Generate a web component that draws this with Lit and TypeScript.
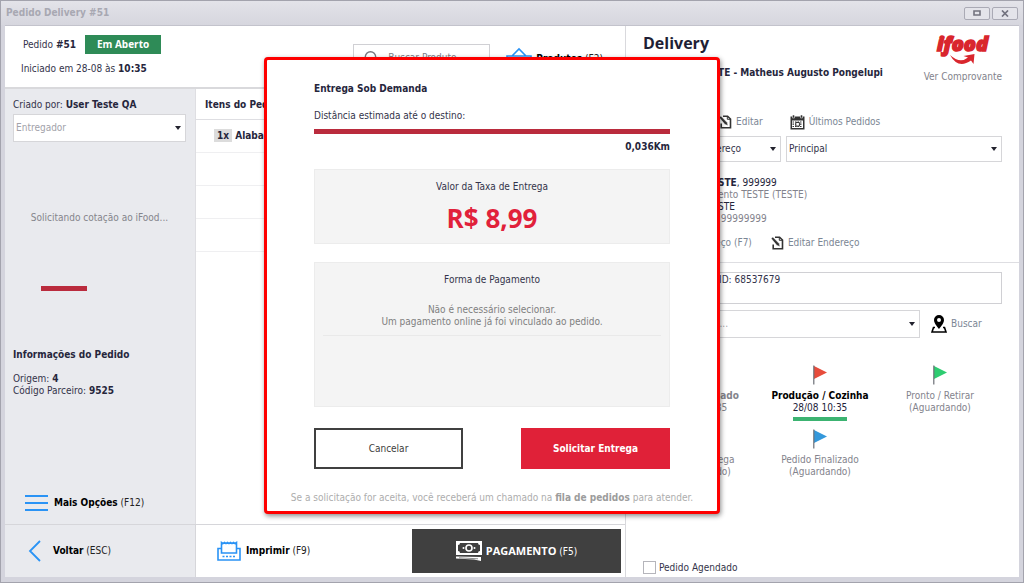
import { LitElement, html, css, svg } from "lit";
import { customElement, property } from "lit/decorators.js";
import { classMap } from "lit/directives/class-map.js";

const caret = html`<svg class="caret" viewBox="0 0 6 4" aria-hidden="true"><path d="M0 0h6L3 4z" fill="currentColor" /></svg>`;

const editIcon = html`<svg class="ico" width="14" height="14" viewBox="0 0 14 14" fill="none" aria-hidden="true">
  <path d="M5 1.2h4.6L12.5 4v8.8H3.2V8.5" stroke="#333" stroke-width="1.6" />
  <path d="M9.3 1v3.3h3.2" stroke="#333" stroke-width="1" />
  <path d="M1.2 2.6 2.8 1l6.4 6.6.8 2.9-3-.9z" fill="#333" stroke="#fff" stroke-width=".5" />
</svg>`;

interface Stage {
  title: string;
  detail: string;
  color: string;
  current?: boolean;
  past?: boolean;
}

@customElement("order-stage")
export class OrderStage extends LitElement {
  static styles = css`
    :host { display: block; text-align: center; color: #83838c; }
    .box { display: flex; flex-direction: column; align-items: center; height: 64px; }
    .flag { display: block; height: 20px; margin-bottom: 5px; }
    .past .title { font-weight: bold; color: #83838c; }
    .current .title { font-weight: bold; color: #000; }
    .current .detail { color: #22223a; }
    .current .detail::after { content: ""; display: block; height: 4px; margin-top: 3px; background: #3cb371; }
  `;
  @property({ attribute: false }) stage!: Stage;
  render() {
    const s = this.stage;
    return html`<div class=${classMap({ box: true, current: !!s.current, past: !!s.past })}>
      <svg class="flag" width="16" height="20" viewBox="0 0 16 20" aria-hidden="true">
        <path d="M2 1v13l13-6.500z" fill=${s.color} />
        <path d="M1.8 .5v19" stroke="#6b6f76" stroke-width="1.2" />
      </svg>
      <span class="title">${s.title}</span>
      <span class="detail">${s.detail}</span>
    </div>`;
  }
}

@customElement("delivery-dialog")
export class DeliveryDialog extends LitElement {
  static styles = css`
    :host {
      box-sizing: border-box;
      display: flex;
      flex-direction: column;
      padding: 23px 47px 7px;
      border: 3px solid #fe0000;
      border-radius: 4px;
      background: #fff;
      box-shadow: 1px 2px 5px rgba(0, 0, 0, 0.45);
      color: #33334a;
    }
    h2, p { margin: 0; font-size: 10px; line-height: 12px; }
    h2 { color: #26263c; margin-bottom: 15px; }
    .bar { height: 5px; margin: 7px 0; background: #ba2b3d; }
    .km { font-weight: bold; text-align: right; color: #26263c; margin-bottom: 16px; }
    .card { box-sizing: border-box; background: #f4f4f4; border: 1px solid #ececec; padding: 11px 8px; text-align: center; }
    .fee { height: 75px; margin-bottom: 18px; }
    .price { font: bold 26px/36px "Open Sans", "Noto Sans", sans-serif; color: #e1213a; margin-top: 7px; }
    .pay { height: 145px; }
    .note { color: #808080; margin-top: 18px; padding-bottom: 7px; border-bottom: 1px solid #e9e9e9; }
    .actions { display: flex; justify-content: space-between; margin: 21px 0 23px; }
    button { box-sizing: border-box; width: 149px; height: 41px; padding: 0; font: inherit; }
    .cancel { background: #fff; border: 2px solid #404040; color: #404040; }
    .ok { background: #e02138; border: 0; color: #fff; font-weight: bold; }
    .foot { text-align: center; color: #adadad; margin: 0 -40px; white-space: nowrap; }
    .foot b { color: #9c9c9c; }
  `;
  render() {
    return html`
      <h2>Entrega Sob Demanda</h2>
      <p>Distância estimada até o destino:</p>
      <div class="bar"></div>
      <p class="km">0,036Km</p>
      <section class="card fee">
        <p>Valor da Taxa de Entrega</p>
        <div class="price">R$ 8,99</div>
      </section>
      <section class="card pay">
        <p>Forma de Pagamento</p>
        <p class="note">Não é necessário selecionar.<br />Um pagamento online já foi vinculado ao pedido.</p>
      </section>
      <div class="actions">
        <button class="cancel" type="button">Cancelar</button>
        <button class="ok" type="button">Solicitar Entrega</button>
      </div>
      <p class="foot">Se a solicitação for aceita, você receberá um chamado na <b>fila de pedidos</b> para atender.</p>
    `;
  }
}

@customElement("app-root")
export class AppRoot extends LitElement {
  static styles = css`
    :host {
      box-sizing: border-box;
      position: relative;
      display: flex;
      flex-direction: column;
      min-height: 100vh;
      padding: 0 4px 5px;
      border: 1px solid #a3a3ad;
      background: #d4d4dd;
      font: 10px/12px "DejaVu Sans Condensed", "Noto Sans", sans-serif;
      color: #33334a;
    }
    * { box-sizing: border-box; }
    h1, h2, p { margin: 0; font-size: inherit; }
    b { color: #26263c; }
    button { display: flex; align-items: center; padding: 0; border: 0; background: none; font: inherit; color: inherit; text-align: left; }
    svg { display: block; flex: none; }

    .titlebar { display: flex; align-items: center; gap: 2px; height: 24px; margin: 0 -4px; padding: 0 5px; background: linear-gradient(#e3e3e9, #d6d6de); }
    .titlebar h1 { flex: 1; color: #a8a8b2; }
    .win { width: 26px; height: 13px; justify-content: center; border: 1px solid #aaaab5; border-radius: 2px; background: #e4e4ea; }

    .frame { flex: 1; display: grid; grid-template-columns: minmax(0, 1fr) 393px; border-top: 1px solid #c3c3cc; background: #fff; }
    .main { display: grid; grid-template-columns: 191px minmax(0, 1fr); grid-template-rows: 63px 1fr 53px; border-right: 1px solid #d9d9dd; }

    .top { grid-column: 1 / -1; display: flex; align-items: flex-start; padding: 9px 21px 0 16px; border-bottom: 2px solid #d9d9dc; }
    .order { flex: 1; }
    .state { display: flex; align-items: center; gap: 9px; padding-left: 2px; margin-bottom: 9px; }
    .badge { padding: 0 12px; background: #2e8b57; color: #fff; font: bold 10px/19px "Open Sans", sans-serif; }
    .search { display: flex; align-items: center; gap: 10px; width: 137px; height: 27px; margin: 9px 16px 0 0; padding-left: 10px; border: 1px solid #d0d0d4; }
    .search input { width: 90px; padding: 0; border: 0; outline: 0; font: inherit; background: none; }
    input::placeholder { color: #808088; opacity: 1; }
    .prod { gap: 4px; margin: 12px 1px 0 0; color: #222; }
    .prod b, .act b { color: #000; }

    .side { display: flex; flex-direction: column; padding: 10px 9px 12px 8px; background: #e9eaee; border-right: 1px solid #dedee2; }
    .pick { display: grid; align-items: center; border: 1px solid #d6d6d9; background: #fff; }
    .pick select { grid-area: 1 / 1; width: 100%; height: 100%; padding: 0 3px 0 2px; border: 0; appearance: none; background: none; font: inherit; color: #33334a; outline: 0; }
    .pick .caret { grid-area: 1 / 1; justify-self: end; width: 6px; height: 4px; margin-right: 4px; color: #22222e; pointer-events: none; }
    .side .pick { height: 28px; margin-top: 3px; }
    .side .pick select { color: #a2a2aa; }
    .wait { margin-top: 70px; text-align: center; color: #85858c; }
    .load { width: 46px; height: 5px; margin: 62px 0 58px 28px; background: #ba2b3d; }
    .info { margin-bottom: 12px; font-weight: bold; color: #26263c; }
    .act { gap: 6px; color: #222; }
    .side .act { margin-top: auto; padding-left: 12px; }

    .items { border-collapse: collapse; align-self: start; width: 100%; }
    .items th, .items td { height: 33px; padding: 0 9px; border-bottom: 1px solid #efeff1; text-align: left; font-weight: bold; color: #26263c; }
    .items th { height: 30px; padding-top: 2px; border-color: #dedee2; }
    .items td { padding-left: 18px; }
    .qty { display: inline-block; padding: 0 3px; background: #dcdcdc; line-height: 13px; }

    .back { padding-left: 22px; background: #e9eaee; border: 1px solid #d6d6da; border-width: 1px 1px 0 0; display: flex; }
    .bottom { display: flex; justify-content: space-between; padding: 4px 4px 4px 21px; border-top: 1px solid #d6d6da; }
    .bottom .act { gap: 5px; }
    .bottom .pay { justify-content: center; gap: 4px; width: 209px; background: #404040; color: #fff; }
    .pay b { color: #fff; font: bold 11px/12px "Open Sans", sans-serif; }

    .panel { display: flex; flex-direction: column; min-width: 0; color: #83838c; }
    .block { padding: 8px 17px 11px 17px; border-bottom: 1px solid #dedee2; }
    .head { display: flex; justify-content: space-between; height: 80px; }
    .head h2 { font: bold 16px/18px "Open Sans", "Noto Sans", sans-serif; color: #1f1f35; margin-bottom: 15px; }
    .lead { display: inline-block; width: 75px; text-align: right; }
    .dark { color: #26263c; }
    .logo { flex-direction: column; align-self: flex-start; gap: 3px; color: #83838c; }
    .logo svg { overflow: visible; }
    .logo text { font: italic 800 20px/24px "Open Sans", sans-serif; }
    .links { display: flex; align-items: center; gap: 27px; height: 16px; padding-left: 75px; }
    .links.place { gap: 18px; padding-left: 46px; }
    .links a, .find { display: flex; align-items: center; gap: 4px; color: #7b8694; text-decoration: none; }
    .pair { display: grid; grid-template-columns: 85px 1fr; gap: 5px; padding-left: 53px; margin: 6px 0 15px; }
    .pair .pick { height: 26px; }
    .addr { margin-bottom: 10px; font-style: normal; }
    .addr div { height: 12px; white-space: nowrap; }
    .more { padding: 9px 17px 3px 17px; flex: 1; display: flex; flex-direction: column; align-items: stretch; }
    textarea { display: block; width: 100%; height: 32px; margin: 0 0 6px; padding: 1px 0 0 75px; border: 1px solid #d0d0d4; border-radius: 0; outline: 0; resize: none; overflow: hidden; font: inherit; color: #33334a; }
    .row { display: flex; align-items: center; gap: 11px; }
    .row .pick { flex: 1; height: 28px; }
    .row .pick select { padding-left: 32px; color: #a2a2aa; }
    .find { width: 71px; }
    .stages { display: grid; grid-template-columns: repeat(3, 120px); margin: 27px 0 0 -3px; }
    .sched { display: flex; align-items: center; gap: 3px; margin-top: auto; color: #33334a; }
    .sched input { appearance: none; width: 13px; height: 13px; margin: 0; border: 1px solid #b5b5bb; background: #fff; }

    .modal { position: absolute; left: 263px; top: 56px; width: 456px; }
  `;

  private stages: Stage[] = [
    { title: "Pedido Iniciado", detail: "28/08 10:35", color: "#9b9ba2", past: true },
    { title: "Produção / Cozinha", detail: "28/08 10:35", color: "#e74c3c", current: true },
    { title: "Pronto / Retirar", detail: "(Aguardando)", color: "#2ecc71" },
    { title: "Saiu p/ Entrega", detail: "(Aguardando)", color: "#f1c40f" },
    { title: "Pedido Finalizado", detail: "(Aguardando)", color: "#3498db" },
  ];

  render() {
    return html`
      <header class="titlebar">
        <h1>Pedido Delivery #51</h1>
        <button class="win" type="button" aria-label="Maximizar">
          <svg width="8" height="6" viewBox="0 0 8 6"><path d="M1 1h6v4H1z" fill="none" stroke="#73737f" stroke-width="1.6" /></svg>
        </button>
        <button class="win" type="button" aria-label="Fechar">
          <svg width="8" height="7" viewBox="0 0 8 7"><path d="M1 .5l6 6M7 .5l-6 6" stroke="#73737f" stroke-width="1.7" /></svg>
        </button>
      </header>
      <div class="frame">
        <main class="main">${this.renderTop()}${this.renderSide()}${this.renderItems()}${this.renderBottom()}</main>
        ${this.renderPanel()}
      </div>
      <delivery-dialog class="modal" role="dialog" aria-label="Entrega Sob Demanda"></delivery-dialog>
    `;
  }

  private renderTop() {
    return html`<section class="top">
      <div class="order">
        <div class="state"><span>Pedido <b>#51</b></span><span class="badge">Em Aberto</span></div>
        <p>Iniciado em 28-08 às <b>10:35</b></p>
      </div>
      <label class="search">
        <svg width="14" height="14" viewBox="0 0 14 14" fill="none" stroke="#77777f" stroke-width="1.4" aria-hidden="true"><circle cx="6.5" cy="6" r="5.2" /><path d="M10 10l3.5 3.5" /></svg>
        <input type="text" placeholder="Buscar Produto" aria-label="Buscar Produto" />
      </label>
      <button class="prod" type="button">
        <svg width="26" height="24" viewBox="0 0 26 24" fill="none" stroke="#2a93f5" stroke-width="1.6" aria-hidden="true">
          <path d="M1 9h24v4H1zM6 9l7-7 7 7M3 13l3 10h14l3-10" />
        </svg>
        <span><b>Produtos</b> (F2)</span>
      </button>
    </section>`;
  }

  private renderSide() {
    return html`<aside class="side">
      <label for="courier">Criado por: <b>User Teste QA</b></label>
      <div class="pick"><select id="courier"><option>Entregador</option></select>${caret}</div>
      <p class="wait">Solicitando cotação ao iFood...</p>
      <div class="load"></div>
      <h2 class="info">Informações do Pedido</h2>
      <p>Origem: <b>4</b></p>
      <p>Código Parceiro: <b>9525</b></p>
      <button class="act" type="button">
        <svg width="23" height="18" viewBox="0 0 23 18" stroke="#2a93f5" stroke-width="2" aria-hidden="true"><path d="M0 2h23M0 9h23M0 16h23" /></svg>
        <span><b>Mais Opções</b> (F12)</span>
      </button>
    </aside>`;
  }

  private renderItems() {
    return html`<table class="items">
      <thead><tr><th>Itens do Pedido</th></tr></thead>
      <tbody>
        <tr><td><span class="qty">1x</span> Alabama</td></tr>
        <tr><td></td></tr>
        <tr><td></td></tr>
        <tr><td></td></tr>
      </tbody>
    </table>`;
  }

  private renderBottom() {
    return html`
      <div class="back">
        <button class="act" type="button">
          <svg width="20" height="22" viewBox="0 0 20 22" fill="none" stroke="#2a93f5" stroke-width="1.8" aria-hidden="true"><path d="M13 1L3 11l10 10" /></svg>
          <span><b>Voltar</b> (ESC)</span>
        </button>
      </div>
      <div class="bottom">
        <button class="act" type="button">
          <svg width="24" height="20" viewBox="0 0 24 20" fill="none" stroke="#2a93f5" stroke-width="1.6" aria-hidden="true">
            <path d="M4.5 7.500H1v11.500h22V7.500h-3.500" /><path d="M4.500 12V1.500l1.500 1 1.500-1 1.500 1 1.500-1 1.500 1 1.500-1 1.500 1 1.500-1 1.500 1 1.500-1V12z" />
            <path d="M5.500 15.500h14" stroke-dasharray="2 1.500" stroke-width="1.500" />
          </svg>
          <span><b>Imprimir</b> (F9)</span>
        </button>
        <button class="pay" type="button">
          <svg width="26" height="20" viewBox="0 0 26 20" aria-hidden="true">
            <path d="M0 0h26v14H0z" fill="#fff" />
            <path d="M4 2h18q0 2 2 2v6q-2 0-2 2H4q0-2-2-2V4q2 0 2-2z" fill="#404040" />
            <circle cx="13" cy="7" r="3" fill="none" stroke="#fff" stroke-width="1.600" />
            <circle cx="7.500" cy="7" r="1" fill="#fff" /><circle cx="18.500" cy="7" r="1" fill="#fff" />
            <path d="M0 15.500l25 .5v4L18 18.500 0 17.500z" fill="#fff" /><path d="M3 16.800l19 1" stroke="#404040" stroke-width=".6" />
          </svg>
          <span><b>PAGAMENTO</b> (F5)</span>
        </button>
      </div>`;
  }

  private renderPanel() {
    return html`<section class="panel">
      <div class="block">
        <div class="head">
          <div>
            <h2>Delivery</h2>
            <b><span class="lead">TES</span>TE - Matheus Augusto Pongelupi</b>
          </div>
          <button class="logo" type="button">
            <svg width="60" height="34" viewBox="0 0 60 34" aria-hidden="true">
              ${svg`<text x="4" y="17" fill="#d9262d" stroke="#d9262d" stroke-width="1.500">ifood</text>`}
              <path d="M17 21q10 9 18 2.500l-4.500-1.500 11-2-1 10-2.500-3.500q-13 9-21-5.500z" fill="#d9262d" />
            </svg>
            <span>Ver Comprovante</span>
          </button>
        </div>
        <nav class="links">
          <a href="#editar">${editIcon}Editar</a>
          <a href="#ultimos">
            <svg class="ico" width="15" height="15" viewBox="0 0 15 15" aria-hidden="true">
              <path d="M.5 1.500h14v13H.5z" fill="#333" /><path d="M2 5.500h11V13H2z" fill="#fff" />
              <path d="M2.500 0h2v3h-2zM10.500 0h2v3h-2z" fill="#333" stroke="#fff" stroke-width=".5" />
              <path d="M2.500 7h10M2.500 9.200h10M2.500 11.500h10" stroke="#333" stroke-width="1.200" stroke-dasharray="1.500 1" />
              <path d="M5.800 7.500h3.600v3.600H5.800z" fill="#fff" stroke="#333" />
            </svg>Últimos Pedidos</a>
        </nav>
        <div class="pair">
          <div class="pick"><select aria-label="Tipo"><option>Endereço</option></select>${caret}</div>
          <div class="pick"><select aria-label="Lista"><option>Principal</option></select>${caret}</div>
        </div>
        <address class="addr">
          <div class="dark"><b><span class="lead">TE</span>STE</b>, 999999</div>
          <div><span class="lead">Complem</span>ento TESTE (TESTE)</div>
          <div class="dark"><span class="lead">TE</span>STE</div>
          <div><span class="lead">XX</span> 99999999</div>
        </address>
        <nav class="links place">
          <a href="#endereco">Endereço (F7)</a>
          <a href="#editar-endereco">${editIcon}Editar Endereço</a>
        </nav>
      </div>
      <div class="more">
        <textarea aria-label="Observação" .value=${"ID: 68537679"}></textarea>
        <div class="row">
          <div class="pick"><select aria-label="Região"><option>Selecione...</option></select>${caret}</div>
          <button class="find" type="button">
            <svg width="16" height="18" viewBox="0 0 16 18" aria-hidden="true">
              <path d="M8 0a5 5 0 0 1 5 5c0 3.500-5 9-5 9S3 8.500 3 5a5 5 0 0 1 5-5zm0 3a2 2 0 1 0 0 4 2 2 0 0 0 0-4z" fill="#000" fill-rule="evenodd" />
              <path d="M4 12.500H2.500L1 17h14l-1.500-4.500H12" fill="none" stroke="#000" stroke-width="1.600" />
            </svg>Buscar
          </button>
        </div>
        <div class="stages">${this.stages.map((s) => html`<order-stage .stage=${s}></order-stage>`)}</div>
        <label class="sched"><input type="checkbox" />Pedido Agendado</label>
      </div>
    </section>`;
  }
}
